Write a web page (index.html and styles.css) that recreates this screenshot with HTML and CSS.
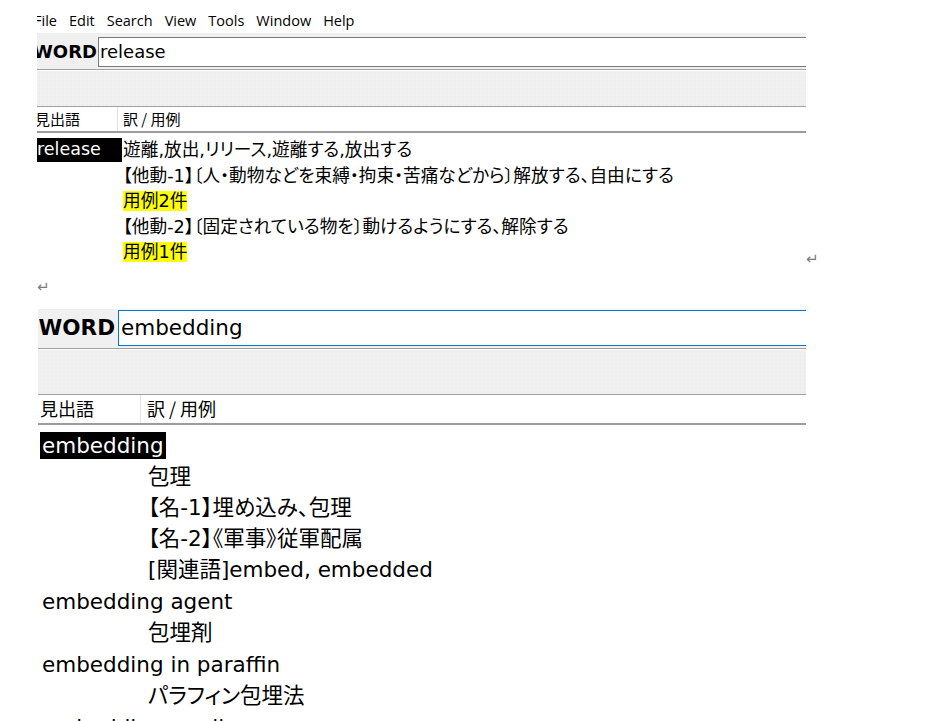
FILE: index.html
```html
<!DOCTYPE html>
<html lang="ja">
<head>
<meta charset="utf-8">
<title>WORD</title>
<link rel="stylesheet" href="styles.css">
</head>
<body>
<div class="doc">
  <div class="para shot-para">
    <div class="shot shot1">
      <div class="app app1">
        <div class="menubar">
          <span>File</span><span>Edit</span><span>Search</span><span>View</span><span>Tools</span><span>Window</span><span>Help</span>
        </div>
        <div class="wordrow">
          <span class="wordlabel">WORD</span>
          <div class="input">release</div>
        </div>
        <div class="toolbar"></div>
        <div class="header">
          <div class="col1">見出語</div>
          <div class="col2">訳 / 用例</div>
        </div>
        <div class="results">
          <div class="entry-row">
            <div class="hw sel">release</div>
            <div class="trans">
              <div class="line">遊離,放出,リリース,遊離する,放出する</div>
              <div class="line">【他動-1】〔人・動物などを束縛・拘束・苦痛などから〕解放する、自由にする</div>
              <div class="line"><span class="mark">用例2件</span></div>
              <div class="line">【他動-2】〔固定されている物を〕動けるようにする、解除する</div>
              <div class="line"><span class="mark">用例1件</span></div>
            </div>
          </div>
        </div>
      </div>
    </div>
    <span class="pmark pmark-end">↵</span>
  </div>
  <div class="para empty"><span class="pmark">↵</span></div>
  <div class="shot shot2">
    <div class="app app2">
      <div class="wordrow">
        <span class="wordlabel">WORD</span>
        <div class="input focused">embedding</div>
      </div>
      <div class="toolbar"></div>
      <div class="header">
        <div class="col1">見出語</div>
        <div class="col2">訳 / 用例</div>
      </div>
      <div class="results">
        <div class="entry">
          <div class="hw"><span class="hwtext sel">embedding</span></div>
          <div class="line">包理</div>
          <div class="line">【名-1】埋め込み、包理</div>
          <div class="line">【名-2】《軍事》従軍配属</div>
          <div class="line">[関連語]embed, embedded</div>
        </div>
        <div class="entry">
          <div class="hw"><span class="hwtext">embedding agent</span></div>
          <div class="line">包埋剤</div>
        </div>
        <div class="entry">
          <div class="hw"><span class="hwtext">embedding in paraffin</span></div>
          <div class="line">パラフィン包埋法</div>
        </div>
        <div class="entry">
          <div class="hw"><span class="hwtext">embedding medium</span></div>
          <div class="line">包埋剤</div>
        </div>
      </div>
    </div>
  </div>
</div>
</body>
</html>
```
FILE: styles.css
```css
html, body {
  margin: 0;
  padding: 0;
  background: #ffffff;
}
body {
  height: 721px;
  overflow: hidden;
  color: #000000;
  font-family: "DejaVu Sans", "Noto Sans CJK JP", sans-serif;
}
.doc {
  margin-left: 37px;
}

/* paragraphs of the document */
.shot-para {
  display: flex;
  align-items: flex-end;
  height: 265px;
}
.pmark {
  font-family: "DejaVu Sans", sans-serif;
  font-size: 15px;
  line-height: 12px;
  color: #7c7c7c;
}
.pmark-end {
  margin-bottom: 0px;
}
.empty {
  height: 44px;
  box-sizing: border-box;
  padding-top: 16px;
  padding-left: 0px;
  line-height: 12px;
}

/* screenshot frames */
.shot {
  overflow: hidden;
}
.shot1 {
  width: 769px;
  height: 265px;
}
.shot2 {
  margin-left: 1px;
  width: 768px;
  height: 420px;
}
.app1 {
  margin-left: -4px;
  width: 800px;
}
.app2 {
  width: 800px;
}

/* menu */
.menubar {
  height: 33px;
  box-sizing: border-box;
  padding: 11px 0 0 1px;
  display: flex;
  gap: 12px;
  font-family: "Open Sans", sans-serif;
  font-size: 14.5px;
  line-height: 20px;
}

/* word row */
.wordrow {
  display: flex;
  align-items: flex-start;
  background: #f0f0f0;
  border-bottom: 1px solid #a0a0a0;
  box-sizing: border-box;
}
.wordlabel {
  font-family: "DejaVu Sans", sans-serif;
  font-weight: bold;
  text-align: right;
  flex: none;
  box-sizing: border-box;
}
.input {
  flex: 1;
  background: #ffffff;
  border: 1px solid #7a7a7a;
  white-space: nowrap;
}
.input.focused {
  border-color: #0078d7;
}
.app1 .wordrow {
  height: 37px;
  padding-top: 4px;
}
.app1 .wordlabel {
  width: 65px;
  padding-right: 2px;
  font-size: 18px;
  line-height: 30px;
}
.app1 .input {
  height: 30px;
  box-sizing: border-box;
  padding-left: 1px;
  font-size: 18px;
  line-height: 27px;
}
.app2 .wordrow {
  height: 40px;
  padding-top: 1px;
}
.app2 .wordlabel {
  width: 80px;
  padding-right: 3px;
  font-size: 21.5px;
  line-height: 36px;
}
.app2 .input {
  height: 36px;
  box-sizing: border-box;
  padding-left: 2px;
  font-size: 21.5px;
  line-height: 33px;
}

/* toolbar strip */
.toolbar {
  background-color: #f0f0f0;
  background-image: radial-gradient(#e9e9e9 0.6px, transparent 0.8px);
  background-size: 4px 4px;
  border-top: 1px solid #ffffff;
  border-bottom: 1px solid #a0a0a0;
}
.app1 .toolbar {
  height: 35px;
}
.app2 .toolbar {
  height: 44px;
}

/* column header */
.header {
  display: flex;
  background: #ffffff;
  border-bottom: 2px solid #9c9c9c;
  font-family: "Noto Sans CJK JP", sans-serif;
}
.header .col1 {
  border-right: 1px solid #e3e3e3;
  flex: none;
  box-sizing: border-box;
}
.app1 .header {
  height: 24px;
  font-size: 15px;
  line-height: 24px;
}
.app1 .header .col1 {
  width: 85px;
  padding-left: 2px;
}
.app1 .header .col2 {
  padding-left: 5px;
}
.app2 .header {
  height: 28px;
  font-size: 18px;
  line-height: 27px;
}
.app2 .header .col1 {
  width: 103px;
  padding-left: 2px;
}
.app2 .header .col2 {
  padding-left: 6px;
}

/* results */
.results {
  font-feature-settings: "palt";
  white-space: nowrap;
}
.app1 .results {
  padding-top: 5px;
  font-size: 17.7px;
}
.entry-row {
  display: flex;
  align-items: flex-start;
}
.app1 .hw.sel {
  width: 89px;
  height: 24px;
  box-sizing: border-box;
  padding-left: 4px;
  background: #000000;
  color: #ffffff;
  font-size: 17.5px;
  line-height: 23px;
  flex: none;
}
.app1 .trans {
  padding-left: 1px;
}
.app1 .line {
  line-height: 25.5px;
  height: 25.5px;
}
.mark {
  background: #ffff00;
}

.app2 .results {
  padding-top: 5px;
  font-size: 21.5px;
}
.entry + .entry {
  margin-top: 1px;
}
.app2 .hw {
  height: 31px;
  display: flex;
  align-items: center;
  padding-left: 2px;
}
.hwtext {
  padding: 0 2px;
  line-height: 27px;
}
.hwtext.sel {
  background: #000000;
  color: #ffffff;
}
.app2 .line {
  height: 31px;
  line-height: 31px;
  padding-left: 110px;
}
```
